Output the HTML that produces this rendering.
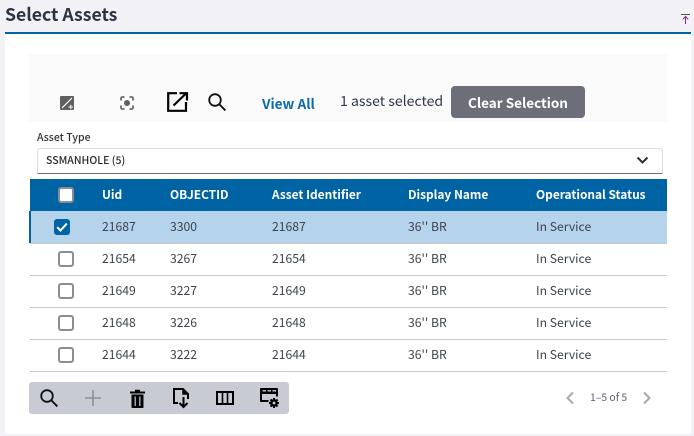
<!DOCTYPE html>
<html><head><meta charset="utf-8"><style>
*{box-sizing:border-box}
html,body{margin:0;padding:0}
body{width:694px;height:436px;background:#f1f1f6;position:relative;overflow:hidden;font-family:"Noto Sans CJK JP","Liberation Sans",sans-serif;color:#333}
.a{position:absolute;white-space:nowrap}
svg{position:absolute;overflow:visible}
.h{color:#fff;font-weight:700;font-size:11.9px;line-height:18px;top:185.5px}
.c{font-size:12.2px;line-height:18px;color:#3d4450;margin-top:-.6px}
.cb{position:absolute;width:16px;height:16px;border:2px solid #8a8d96;border-radius:3px;background:#fff;left:58px}
.ln{position:absolute;left:30px;width:637px;height:1px;background:#c9c9c9}
</style></head><body>
<div class="a" style="left:5px;top:3px;font-size:17.6px;line-height:24px;font-weight:700;color:#2c3444">Select Assets</div>
<svg style="left:680px;top:13px" width="13" height="12" viewBox="0 0 13 12"><path d="M1 1.5H10" stroke="#555" stroke-width="1" fill="none"/><path d="M5.5 11V3.5M2.8 6.3L5.5 3.5L8.2 6.3" stroke="#7b2d86" stroke-width="1" fill="none"/></svg>
<div class="a" style="left:5px;top:32px;width:686px;height:2px;background:#0063a3"></div>
<div class="a" style="left:5px;top:34px;width:686px;height:400px;background:#fff"></div>
<div class="a" style="left:29px;top:54px;width:638px;height:68px;background:#fafafa"></div>

<svg style="left:60px;top:96px" width="14" height="14" viewBox="0 0 14 14"><rect width="14" height="14" rx="1" fill="#5f5f5f"/><path d="M2 12L12 2" stroke="#fff" stroke-width="1.2"/><path d="M8.5 11H13M10.8 8.8V13.2" stroke="#fff" stroke-width="1"/></svg>
<svg style="left:120px;top:96px" width="14" height="14" viewBox="0 0 14 14" fill="none"><path d="M1 4.5V2.5Q1 1 2.5 1H4.5M9.5 1H11.5Q13 1 13 2.5V4.5M13 9.5V11.5Q13 13 11.5 13H9.5M4.5 13H2.5Q1 13 1 11.5V9.5" stroke="#6b6b6b" stroke-width="1.8"/><circle cx="7" cy="7" r="3" fill="#606060"/></svg>
<svg style="left:167px;top:92px" width="21" height="20" viewBox="0 0 21 20" fill="none"><path d="M10 1.2H1.2V18.8H19V10" stroke="#000" stroke-width="2.2"/><path d="M6.5 13.5L18.5 2M12.5 1.2H20V8.5" stroke="#000" stroke-width="2.2"/></svg>
<svg style="left:208px;top:93px" width="18" height="18" viewBox="0 0 18 18" fill="none"><circle cx="7" cy="7" r="5.8" stroke="#111" stroke-width="1.8"/><path d="M11 11L17.4 17.4" stroke="#111" stroke-width="1.9"/></svg>

<div class="a" style="left:262px;top:93.5px;font-size:13.7px;line-height:18px;font-weight:700;color:#0d6aa8">View All</div>
<div class="a" style="left:340px;top:91.5px;font-size:14.1px;line-height:18px;color:#2f3a4a">1 asset selected</div>
<div class="a" style="left:451px;top:86px;width:134px;height:32px;background:#6c6f7a;border-radius:4px;color:#fff;font-weight:700;font-size:13.5px;line-height:33px;text-align:center">Clear Selection</div>

<div class="a" style="left:37px;top:130px;font-size:10.5px;line-height:15px;color:#333;font-weight:500">Asset Type</div>
<div class="a" style="left:37px;top:148px;width:626px;height:26px;background:#fff;border:1px solid #ddd;border-bottom:1px solid #6f7177;border-radius:3px 3px 0 0"></div>
<div class="a" style="left:46px;top:153px;font-size:10.5px;line-height:16px;color:#2b2b2b;font-weight:500">SSMANHOLE (5)</div>
<svg style="left:636px;top:156px" width="13" height="9" viewBox="0 0 13 9" fill="none"><path d="M1.5 1.5L6.5 6.5L11.5 1.5" stroke="#2b2f38" stroke-width="2"/></svg>

<div class="a" style="left:30px;top:179px;width:637px;height:32px;background:#0063a3"></div>
<div class="a" style="left:58px;top:187px;width:16px;height:16px;background:#fff;border:2px solid #8a8d96;border-radius:3px"></div>
<div class="a h" style="left:102px">Uid</div>
<div class="a h" style="left:170px">OBJECTID</div>
<div class="a h" style="left:272px">Asset Identifier</div>
<div class="a h" style="left:408px">Display Name</div>
<div class="a h" style="left:536px">Operational Status</div>

<div class="a" style="left:29px;top:211px;width:638px;height:32px;background:#b5d3eb;border-left:2px solid #0063a3"></div>
<div class="a" style="left:54px;top:219px;width:16px;height:16px;background:#0063a3;border-radius:3px"></div>
<svg style="left:54px;top:219px" width="16" height="16" viewBox="0 0 16 16" fill="none"><path d="M3.2 8.2L6.5 11.5L12.8 4.6" stroke="#fff" stroke-width="2"/></svg>
<div class="ln" style="top:243px"></div><div class="ln" style="top:275px"></div><div class="ln" style="top:307px"></div><div class="ln" style="top:339px"></div><div class="ln" style="top:371px"></div>
<div class="cb" style="top:251px"></div><div class="cb" style="top:283px"></div><div class="cb" style="top:315px"></div><div class="cb" style="top:347px"></div>

<div class="a c" style="left:102px;top:218px">21687</div><div class="a c" style="left:170px;top:218px">3300</div><div class="a c" style="left:272px;top:218px">21687</div><div class="a c" style="left:408px;top:218px">36'' BR</div><div class="a c" style="left:536px;top:218px">In Service</div>
<div class="a c" style="left:102px;top:250px">21654</div><div class="a c" style="left:170px;top:250px">3267</div><div class="a c" style="left:272px;top:250px">21654</div><div class="a c" style="left:408px;top:250px">36'' BR</div><div class="a c" style="left:536px;top:250px">In Service</div>
<div class="a c" style="left:102px;top:282px">21649</div><div class="a c" style="left:170px;top:282px">3227</div><div class="a c" style="left:272px;top:282px">21649</div><div class="a c" style="left:408px;top:282px">36'' BR</div><div class="a c" style="left:536px;top:282px">In Service</div>
<div class="a c" style="left:102px;top:314px">21648</div><div class="a c" style="left:170px;top:314px">3226</div><div class="a c" style="left:272px;top:314px">21648</div><div class="a c" style="left:408px;top:314px">36'' BR</div><div class="a c" style="left:536px;top:314px">In Service</div>
<div class="a c" style="left:102px;top:346px">21644</div><div class="a c" style="left:170px;top:346px">3222</div><div class="a c" style="left:272px;top:346px">21644</div><div class="a c" style="left:408px;top:346px">36'' BR</div><div class="a c" style="left:536px;top:346px">In Service</div>

<div class="a" style="left:29px;top:382px;width:260px;height:32px;background:#c8cbd4;border-radius:3px"></div>
<svg style="left:40px;top:389px" width="18" height="18" viewBox="0 0 18 18" fill="none"><circle cx="7" cy="7" r="5.8" stroke="#111" stroke-width="1.8"/><path d="M11 11L17.4 17.4" stroke="#111" stroke-width="1.9"/></svg>
<svg style="left:85px;top:390px" width="16" height="16" viewBox="0 0 16 16" fill="none"><path d="M8 0V16M0 8H16" stroke="#8d9098" stroke-width="1.6"/></svg>
<svg style="left:130px;top:389px" width="15" height="19" viewBox="0 0 15 19"><path d="M0 2.5H5V0.8H10V2.5H15V4.5H0ZM1.5 5.5H13.5V18Q13.5 19 12.5 19H2.5Q1.5 19 1.5 18Z" fill="#000"/><path d="M5.2 7.5V17M9.8 7.5V17" stroke="#c8cbd4" stroke-width="1.2"/></svg>
<svg style="left:173px;top:388px" width="17" height="21" viewBox="0 0 17 21" fill="none"><path d="M5 15H1V1H10L15 6V11" stroke="#000" stroke-width="2"/><path d="M10 1V6H15" fill="#000" stroke="#000" stroke-width="1.5"/><path d="M10.5 9V19M6.5 15L10.5 19L14.5 15" stroke="#000" stroke-width="2"/></svg>
<svg style="left:216px;top:391px" width="18" height="14" viewBox="0 0 18 14" fill="none"><rect x="1" y="1" width="16" height="12" stroke="#000" stroke-width="2"/><path d="M6.5 1V13M11.5 1V13" stroke="#000" stroke-width="1.6"/></svg>
<svg style="left:260px;top:388px" width="20" height="20" viewBox="0 0 20 20"><path d="M1 0H17Q18 0 18 1V8.5H16V6H2V12H8.5V14H1Q0 14 0 13V1Q0 0 1 0Z" fill="#000"/><path d="M2.5 2.8H6M7.5 2.8H11M12.5 2.8H16" stroke="#c8cbd4" stroke-width="1.4"/><g transform="translate(14 15)"><circle r="3.8" fill="#000"/><path d="M0-5V5M-5 0H5M-3.5-3.5L3.5 3.5M3.5-3.5L-3.5 3.5" stroke="#000" stroke-width="2"/><circle r="1.4" fill="#c8cbd4"/></g></svg>

<svg style="left:565px;top:391px" width="10" height="14" viewBox="0 0 10 14" fill="none"><path d="M8 1.5L2.5 7L8 12.5" stroke="#a9a9a9" stroke-width="2"/></svg>
<div class="a" style="left:590px;top:389px;font-size:10.4px;line-height:16px;color:#565d6b">1–5 of 5</div>
<svg style="left:642px;top:391px" width="10" height="14" viewBox="0 0 10 14" fill="none"><path d="M2 1.5L7.5 7L2 12.5" stroke="#a9a9a9" stroke-width="2"/></svg>
</body></html>
